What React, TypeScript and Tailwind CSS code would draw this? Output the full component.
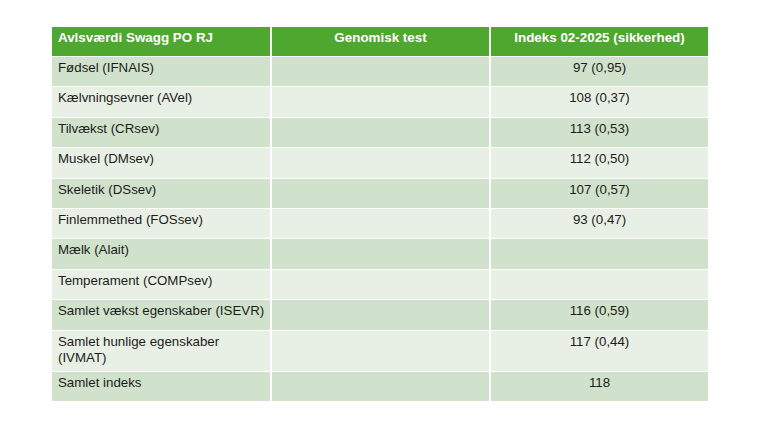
// Avlsværdi-tabel — Swagg PO RJ

const rows: { label: string; test?: string; index?: string; tall?: boolean }[] = [
  { label: 'Fødsel (IFNAIS)', index: '97 (0,95)' },
  { label: 'Kælvningsevner (AVel)', index: '108 (0,37)' },
  { label: 'Tilvækst (CRsev)', index: '113 (0,53)' },
  { label: 'Muskel (DMsev)', index: '112 (0,50)' },
  { label: 'Skeletik (DSsev)', index: '107 (0,57)' },
  { label: 'Finlemmethed (FOSsev)', index: '93 (0,47)' },
  { label: 'Mælk (Alait)' },
  { label: 'Temperament (COMPsev)' },
  { label: 'Samlet vækst egenskaber (ISEVR)', index: '116 (0,59)' },
  { label: 'Samlet hunlige egenskaber (IVMAT)', index: '117 (0,44)', tall: true },
  { label: 'Samlet indeks', index: '118' },
];

export default function App() {
  return (
    <div className="w-[761px] h-[428px] bg-white pt-[27px] pl-[52px] font-['Liberation_Sans',Arial,sans-serif] text-[13.3px] leading-[16px] text-[#1c1c1c]">
      <div className="grid w-[656px] grid-cols-[218px_217px_217px] gap-x-[2px] gap-y-px bg-white">
        {/* Header */}
        <div className="h-[29px] bg-[#4ea72e] px-[6px] pt-[3px] text-[13.4px] font-bold text-white">Avlsværdi Swagg PO RJ</div>
        <div className="h-[29px] bg-[#4ea72e] px-[6px] pt-[3px] text-center text-[13.4px] font-bold text-white">Genomisk test</div>
        <div className="h-[29px] bg-[#4ea72e] px-[6px] pt-[3px] text-center text-[13.4px] font-bold text-white">Indeks 02-2025 (sikkerhed)</div>

        {rows.map((r, i) => {
          const bg = i % 2 === 0 ? 'bg-[#d0e2cb]' : 'bg-[#e8efe5]';
          const h = r.tall ? 'h-[40px]' : 'h-[29.4px]';
          return (
            <div key={r.label} className="contents">
              <div className={`${bg} ${h} pl-[6px] pr-[2px] pt-[3px]`}>{r.label}</div>
              <div className={`${bg} ${h} px-[6px] pt-[3px] text-center`}>{r.test ?? ''}</div>
              <div className={`${bg} ${h} px-[6px] pt-[3px] text-center`}>{r.index ?? ''}</div>
            </div>
          );
        })}
      </div>
    </div>
  );
}
